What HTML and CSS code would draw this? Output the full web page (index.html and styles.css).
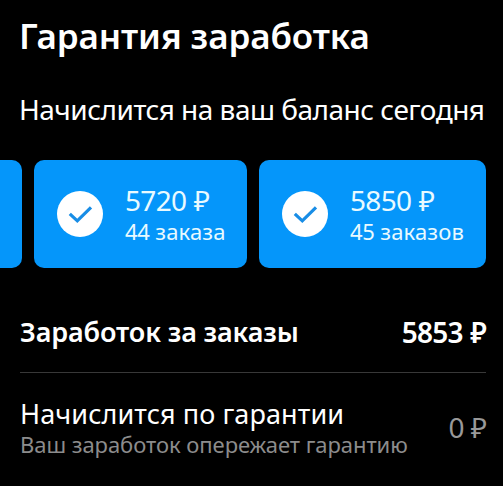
FILE: index.html
```html
<!DOCTYPE html>
<html lang="ru">
<head>
<meta charset="utf-8">
<title>Гарантия заработка</title>
<link rel="stylesheet" href="styles.css">
</head>
<body>
<main class="screen">
  <h1 class="title">Гарантия заработка</h1>
  <p class="subtitle">Начислится на ваш баланс сегодня</p>
  <section class="cards">
    <div class="card card-prev"></div>
    <div class="card">
      <svg class="check" viewBox="0 0 46 46"><circle cx="23" cy="23" r="23" fill="#fff"/><path d="M12.8 22.8L20.3 29.8L34 16.3" fill="none" stroke="#188de6" stroke-width="3.2"/></svg>
      <div class="info"><div class="sum">5720 ₽</div><div class="orders"><span class="count">44</span> заказа</div></div>
    </div>
    <div class="card card-last">
      <svg class="check" viewBox="0 0 46 46"><circle cx="23" cy="23" r="23" fill="#fff"/><path d="M12.8 22.8L20.3 29.8L34 16.3" fill="none" stroke="#188de6" stroke-width="3.2"/></svg>
      <div class="info"><div class="sum">5850 ₽</div><div class="orders"><span class="count">45</span> заказов</div></div>
    </div>
  </section>
  <section class="row earned"><span class="e-name">Заработок за заказы</span><span class="e-val">5853 ₽</span></section>
  <section class="row guarantee">
    <div><div class="g-name">Начислится по гарантии</div><div class="g-note">Ваш заработок опережает гарантию</div></div>
    <span class="g-val">0 ₽</span>
  </section>
</main>
</body>
</html>
```
FILE: styles.css
```css
* { box-sizing: border-box; }
body { margin: 0; background: #000; color: #fff; font-family: "Noto Sans", "DejaVu Sans", sans-serif; }
.screen { width: 503px; height: 486px; overflow: hidden; white-space: nowrap; }
.title { margin: 0; padding: 13px 0 0 19px; font-size: 35px; line-height: 46px; font-weight: 560; letter-spacing: -0.1px; }
.subtitle { margin: 0; padding: 30px 0 0 19px; font-size: 28px; line-height: 40px; letter-spacing: -0.5px; }
.cards { display: flex; gap: 12px; margin-top: 31px; }
.card { display: flex; align-items: center; width: 213px; height: 108px; border-radius: 10px; background: #0596fa; padding-left: 23px; gap: 22px; }
.card-prev { width: 22px; padding: 0; border-radius: 0 10px 10px 0; }
.card-last { width: 227px; }
.check { width: 46px; height: 46px; flex: none; }
.info { padding-top: 2px; }
.sum { font-size: 28px; line-height: 32px; letter-spacing: -0.7px; word-spacing: 1px; color: #e9faff; }
.orders { font-size: 22px; line-height: 30px; letter-spacing: 0.15px; color: #e9faff; }
.count { letter-spacing: -0.4px; }
.row { display: flex; justify-content: space-between; margin: 0 17px 0 20px; }
.earned { margin-top: 44px; height: 61px; border-bottom: 1px solid #383838; font-size: 27px; line-height: 40px; font-weight: 560; }
.e-name { letter-spacing: -0.15px; }
.e-val { font-size: 28px; letter-spacing: -0.8px; word-spacing: 1px; }
.guarantee { padding-top: 23px; }
.g-name { font-size: 27px; line-height: 36px; letter-spacing: 0.1px; }
.g-note { font-size: 22px; line-height: 25px; letter-spacing: -0.05px; color: #8c8c8c; }
.g-val { font-size: 28px; line-height: 62px; letter-spacing: -1px; word-spacing: 1px; color: #999; }
```
